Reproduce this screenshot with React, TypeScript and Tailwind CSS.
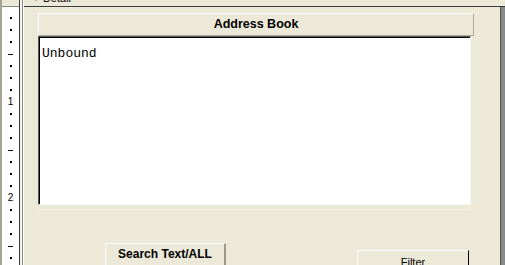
import React from "react";

const ticks = Array.from({ length: 21 }, (_, i) => i + 1);

const Ruler = () => (
  <div className="flex w-[24px] shrink-0">
    <div className="flex w-[20px] flex-col border-l-2 border-[#a7a493] border-r border-r-[#3c3c3c] bg-white">
      <div className="h-[7px] shrink-0 border-b border-[#8c8a7c] bg-[#ece9d8]" />
      <div className="h-[5px] shrink-0" />
      {ticks.map((n) => (
        <div key={n} className="flex h-[12px] shrink-0 items-center justify-center">
          {n % 8 === 0 ? (
            <span className="text-[10px] leading-none text-black">{n / 8}</span>
          ) : n % 4 === 0 ? (
            <div className="h-[1px] w-[5px] bg-black" />
          ) : (
            <div className="h-[2px] w-[2px] bg-black" />
          )}
        </div>
      ))}
    </div>
    <div className="w-[2px] bg-[#f5f4ee]" />
    <div className="w-[1px] bg-[#8c8a7c]" />
    <div className="w-[1px] bg-white" />
  </div>
);

const App = () => {
  return (
    <div
      className="flex h-[265px] w-[505px] overflow-hidden bg-[#ece9d8] text-black"
      style={{ fontFamily: '"Liberation Sans", Arial, sans-serif' }}
    >
      <Ruler />
      <div className="flex min-w-0 flex-1 flex-col">
        {/* Detail section bar */}
        <div className="h-[7px] shrink-0 overflow-hidden border-b border-[#3c3c3c]">
          <div className="-mt-[7px] flex items-center gap-[3px] pl-[8px] text-[11px] leading-[11px]">
            <span className="text-[8px]">▼</span>
            <span>Detail</span>
          </div>
        </div>

        <div className="flex min-h-0 flex-1">
          <div className="flex min-w-0 flex-1 flex-col pl-[14px] pt-[6px]">
            {/* Label */}
            <div className="flex h-[23px] w-[436px] shrink-0 items-center justify-center border-t border-l border-t-white border-l-white border-r border-b border-r-[#aca899] border-b-[#aca899] bg-[#ece9d8]">
              <span className="text-[12.5px] font-bold leading-none">Address Book</span>
            </div>
            {/* Text box */}
            <div className="h-[169px] w-[433px] shrink-0 border-t border-l border-t-[#5a5a5a] border-l-[#5a5a5a] border-r border-b border-r-[#fbfaf5] border-b-[#fbfaf5]">
              <div className="h-full w-full border-t border-l border-t-black border-l-black bg-white px-[2px] pt-[2px]">
                <span
                  className="text-[13px] leading-[15px]"
                  style={{ fontFamily: '"Liberation Mono", "Courier New", monospace' }}
                >
                  Unbound
                </span>
              </div>
            </div>
            <div className="mt-[4px] h-[1px] w-[433px] shrink-0 bg-[#f3f1e6]" />

            {/* Buttons */}
            <div className="flex shrink-0 items-start">
              <div className="ml-[67px] mt-[33px] flex h-[26px] w-[121px] shrink-0 items-start justify-center border-t border-l border-t-white border-l-white border-r-2 border-r-[#9d9a8a] bg-[#ece9d8] pt-[3px]">
                <span className="text-[12px] font-bold leading-[14px]">Search Text/ALL</span>
              </div>
              <div className="ml-[131px] mt-[40px] flex h-[26px] w-[112px] shrink-0 items-start justify-center border-t border-l border-t-white border-l-white border-r border-r-black bg-[#ece9d8] pt-[5px]">
                <span className="text-[11px] leading-[13px]">Filter</span>
              </div>
            </div>
          </div>
          <div className="w-[5px] shrink-0 border-l border-[#555] bg-[#888888]" />
        </div>
      </div>
    </div>
  );
};

export default App;
